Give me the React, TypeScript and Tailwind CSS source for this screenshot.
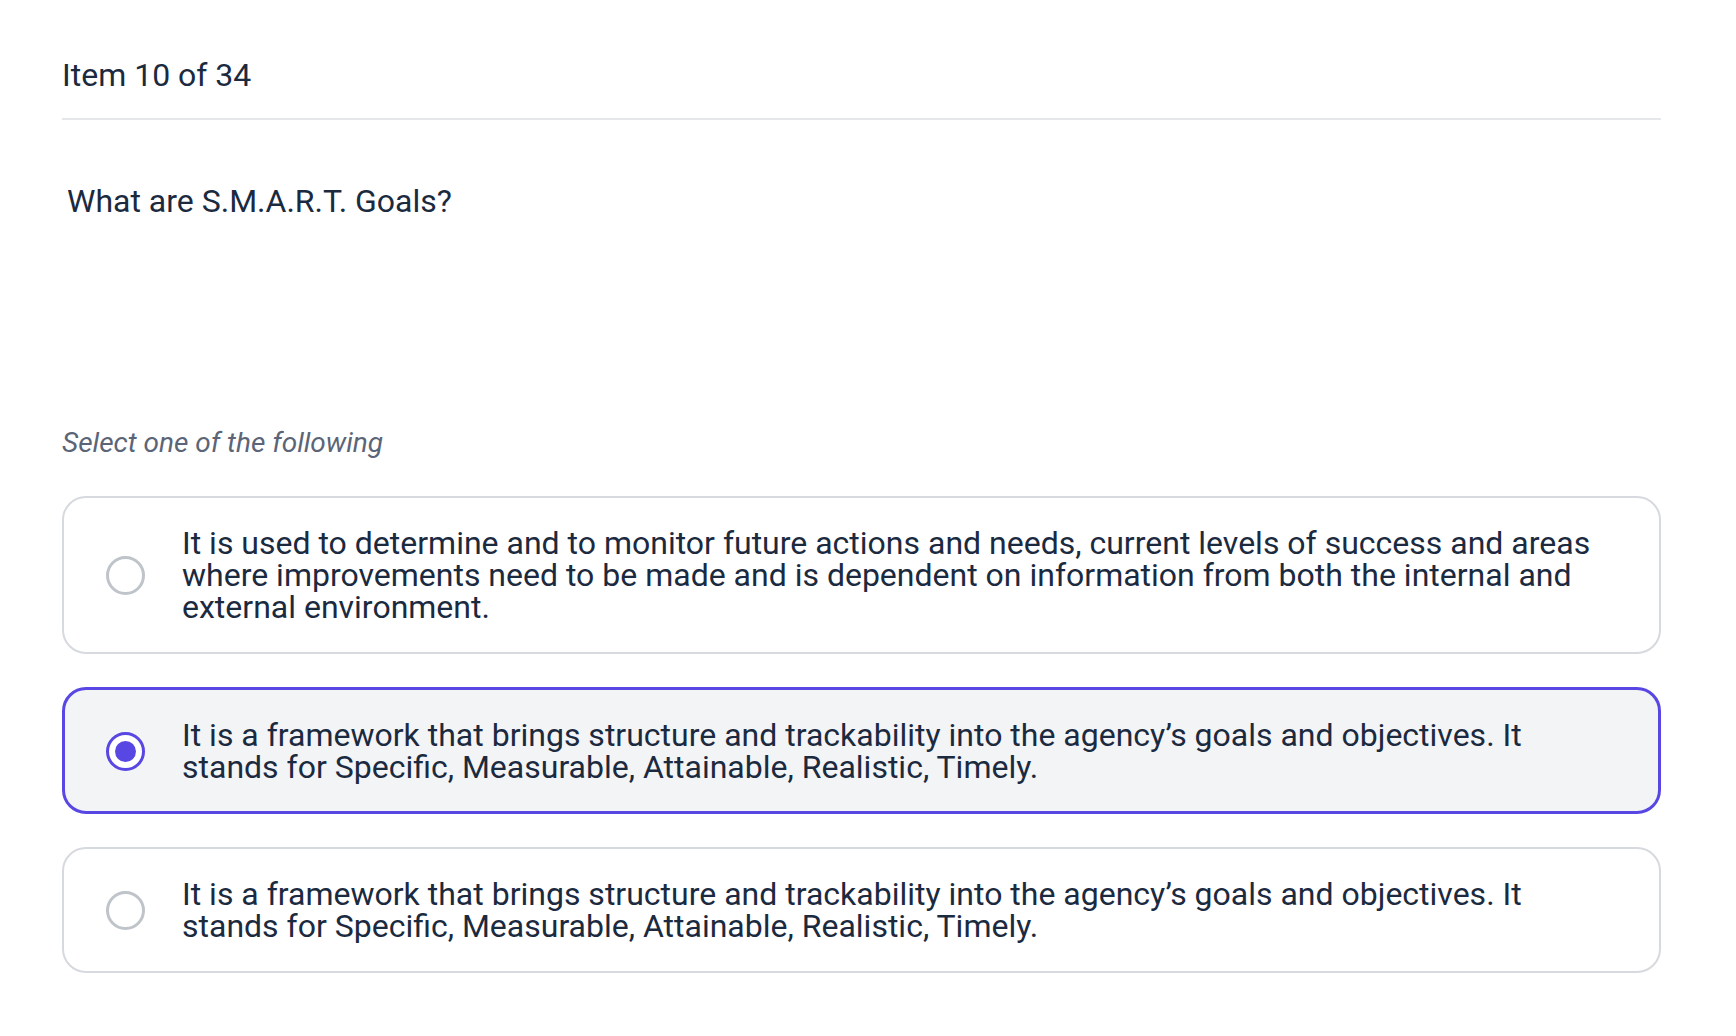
import { useState } from 'react'

const options = [
  'It is used to determine and to monitor future actions and needs, current levels of success and areas where improvements need to be made and is dependent on information from both the internal and external environment.',
  'It is a framework that brings structure and trackability into the agency\u2019s goals and objectives. It stands for Specific, Measurable, Attainable, Realistic, Timely.',
  'It is a framework that brings structure and trackability into the agency\u2019s goals and objectives. It stands for Specific, Measurable, Attainable, Realistic, Timely.',
]

function Radio({ checked }: { checked: boolean }) {
  return checked ? (
    <span className="flex h-[39px] w-[39px] shrink-0 items-center justify-center rounded-full border-[3px] border-[#5847e3] bg-white">
      <span className="h-[21px] w-[21px] rounded-full bg-[#5847e3]" />
    </span>
  ) : (
    <span className="h-[39px] w-[39px] shrink-0 rounded-full border-[3px] border-[#bfc4ca] bg-white" />
  )
}

export default function App() {
  const [selected, setSelected] = useState(1)

  return (
    <div className="min-h-screen bg-white font-['Roboto',_sans-serif] text-[#1b2a3f]">
      <div className="pl-[62px] pr-[75px] pt-[55px]">
        {/* Header */}
        <div className="border-b-2 border-[#e5e7eb] pb-[23px] text-[32px] leading-[40px]">Item 10 of 34</div>

        {/* Question */}
        <div className="mt-[61px] min-h-[244px] pl-[5px] text-[32px] leading-[40px]">What are S.M.A.R.T. Goals?</div>

        <div className="text-[28px] italic leading-[36px] text-[#5b6577]">Select one of the following</div>

        {/* Options */}
        <div className="mt-[35px] flex flex-col gap-[33px]">
          {options.map((text, i) => {
            const active = selected === i
            return (
              <button
                key={i}
                onClick={() => setSelected(i)}
                className={
                  active
                    ? 'flex items-center rounded-[24px] border-[3px] border-[#5847e3] bg-[#f3f4f6] pt-[29px] pb-[28px] pl-[41px] pr-[55px] text-left'
                    : 'flex items-center rounded-[24px] border-2 border-[#d6d9de] bg-white py-[29px] pl-[42px] pr-[56px] text-left'
                }
              >
                <Radio checked={active} />
                <span className="ml-[37px] text-[32px] leading-[32px]">{text}</span>
              </button>
            )
          })}
        </div>
      </div>
    </div>
  )
}
